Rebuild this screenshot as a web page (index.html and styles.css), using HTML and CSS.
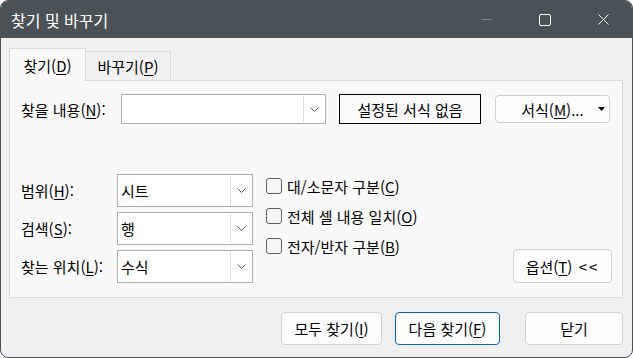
FILE: index.html
```html
<!DOCTYPE html>
<html lang="ko">
<head>
  <meta charset="UTF-8" />
  <title>찾기 및 바꾸기</title>
  <link rel="stylesheet" href="styles.css">
</head>
<body>
  <div class="window">
    <div class="titlebar">
      <span class="title">찾기 및 바꾸기</span>
      <div class="caption-buttons">
        <span class="cap-btn"><svg width="10" height="1"><rect width="10" height="1" fill="#7d8388"/></svg></span>
        <span class="cap-btn"><svg width="12" height="12"><rect x="0.5" y="0.5" width="11" height="11" rx="1.5" fill="none" stroke="#fff"/></svg></span>
        <span class="cap-btn"><svg width="11" height="11"><path d="M0.5 0.5L10.5 10.5M10.5 0.5L0.5 10.5" stroke="#fff"/></svg></span>
      </div>
    </div>

    <div class="client">
      <div class="tabs">
        <div class="tab active">찾기(<u>D</u>)</div>
        <div class="tab">바꾸기(<u>P</u>)</div>
      </div>

      <div class="panel">
        <div class="find-row">
          <label class="field-label find-label">찾을 내용(<u>N</u>):</label>
          <div class="combo find-combo">
            <span class="combo-text"></span>
            <span class="combo-arrow"><svg width="9" height="5"><path d="M0.5 0.5L4.5 4.5L8.5 0.5" fill="none" stroke="#5a5a5a"/></svg></span>
          </div>
          <button class="btn format-preview">설정된 서식 없음</button>
          <button class="btn format-btn">
            <span></span>
            <span>서식(<u>M</u>)...</span>
            <svg class="drop-tri" width="7" height="4"><path d="M0 0H7L3.5 4Z" fill="#000"/></svg>
          </button>
        </div>

        <div class="options">
          <div class="selects">
            <div class="select-row">
              <label class="field-label">범위(<u>H</u>):</label>
              <div class="combo">
                <span class="combo-text">시트</span>
                <span class="combo-arrow"><svg width="9" height="5"><path d="M0.5 0.5L4.5 4.5L8.5 0.5" fill="none" stroke="#5a5a5a"/></svg></span>
              </div>
            </div>
            <div class="select-row">
              <label class="field-label">검색(<u>S</u>):</label>
              <div class="combo">
                <span class="combo-text">행</span>
                <span class="combo-arrow"><svg width="9" height="5"><path d="M0.5 0.5L4.5 4.5L8.5 0.5" fill="none" stroke="#5a5a5a"/></svg></span>
              </div>
            </div>
            <div class="select-row">
              <label class="field-label">찾는 위치(<u>L</u>):</label>
              <div class="combo">
                <span class="combo-text">수식</span>
                <span class="combo-arrow"><svg width="9" height="5"><path d="M0.5 0.5L4.5 4.5L8.5 0.5" fill="none" stroke="#5a5a5a"/></svg></span>
              </div>
            </div>
          </div>

          <div class="checks">
            <div class="check"><span class="box"></span>대/소문자 구분(<u>C</u>)</div>
            <div class="check"><span class="box"></span>전체 셀 내용 일치(<u>O</u>)</div>
            <div class="check"><span class="box"></span>전자/반자 구분(<u>B</u>)</div>
          </div>

          <button class="btn options-btn">옵션(<u>T</u>) <span class="chevrons">&lt;&lt;</span></button>
        </div>
      </div>

      <div class="actions">
        <button class="btn find-all">모두 찾기(<u>I</u>)</button>
        <button class="btn find-next default">다음 찾기(<u>F</u>)</button>
        <button class="btn close-btn">닫기</button>
      </div>
    </div>
  </div>
</body>
</html>
```

FILE: styles.css
```css
:root {
  --frame: #4b5257;
  --face: #f0f0f0;
  --panel: #f9f9f9;
  --line: #dadada;
  --field-border: #adadad;
  --btn-border: #d0d0d0;
  --accent: #0067c0;
}

* {
  box-sizing: border-box;
  margin: 0;
  padding: 0;
}

html,
body {
  background: #ffffff;
}

body {
  font-family: "Noto Sans CJK KR", "Noto Sans", sans-serif;
  font-size: 15px;
  color: #000;
}

u {
  text-underline-offset: 2px;
}

.window {
  width: 633px;
  height: 358px;
  background: var(--face);
  border: 1px solid var(--frame);
  border-radius: 8px;
  overflow: hidden;
  display: flex;
  flex-direction: column;
}

/* title bar */
.titlebar {
  height: 37px;
  flex-shrink: 0;
  background: var(--frame);
  color: #fff;
  display: flex;
  align-items: center;
}

.title {
  padding-left: 10px;
  font-size: 16px;
}

.caption-buttons {
  margin-left: auto;
  display: flex;
}

.cap-btn {
  width: 58px;
  height: 37px;
  display: flex;
  align-items: center;
  justify-content: center;
}

.cap-btn svg {
  display: block;
}

/* dialog body */
.client {
  flex: 1;
  padding: 10px 9px 0 8px;
}

.tabs {
  display: flex;
  align-items: flex-end;
  height: 32px;
}

.tab {
  height: 29px;
  width: 85px;
  border: 1px solid var(--line);
  border-bottom: none;
  border-left: none;
  background: var(--face);
  display: flex;
  align-items: center;
  justify-content: center;
}

.tab.active {
  width: 77px;
  height: 33px;
  margin-bottom: -1px;
  border-left: 1px solid var(--line);
  background: var(--panel);
  position: relative;
  z-index: 1;
}

.panel {
  height: 218px;
  border: 1px solid var(--line);
  background: var(--panel);
  padding: 13px 10px 0 11px;
}

.field-label {
  width: 96px;
  white-space: nowrap;
}

.find-row {
  display: flex;
  align-items: center;
  height: 30px;
}

.find-label {
  width: 100px;
}

.combo {
  width: 136px;
  height: 33px;
  border: 1px solid var(--field-border);
  background: #fff;
  display: flex;
}

.combo-text {
  flex: 1;
  padding-left: 3px;
  display: flex;
  align-items: center;
}

.combo-arrow {
  width: 21px;
  margin: 1px 1px 1px 0;
  border-left: 1px solid #dcdcdc;
  display: flex;
  align-items: center;
  justify-content: center;
}

.find-combo {
  width: 205px;
  height: 30px;
}

.btn {
  font-family: inherit;
  font-size: 15px;
  color: #000;
  background: #fdfdfd;
  border: 1px solid var(--btn-border);
  border-radius: 4px;
  height: 33px;
}

.btn.default {
  border-color: var(--accent);
}

.format-preview {
  width: 142px;
  height: 30px;
  margin-left: 13px;
  border: 1px solid #000;
  border-radius: 0;
  background: #fafafa;
}

.format-btn {
  width: 115px;
  height: 28px;
  margin-left: 14px;
  display: grid;
  grid-template-columns: 1fr auto 1fr;
  align-items: center;
}

.drop-tri {
  justify-self: end;
  margin-right: 4px;
}

/* option area */
.options {
  margin-top: 50px;
  display: flex;
  align-items: flex-start;
}

.selects {
  display: flex;
  flex-direction: column;
  gap: 5px;
}

.select-row {
  display: flex;
  align-items: center;
}

.checks {
  margin-left: 13px;
  display: flex;
  flex-direction: column;
  gap: 6px;
}

.check {
  height: 24px;
  display: flex;
  align-items: center;
  white-space: nowrap;
}

.box {
  width: 16px;
  height: 16px;
  border: 1px solid #5f5f5f;
  border-radius: 3px;
  background: #f5f5f5;
  margin-right: 5px;
}

.options-btn {
  margin-left: auto;
  align-self: flex-end;
  width: 99px;
  height: 34px;
}

.chevrons {
  letter-spacing: 2px;
  margin-left: 2px;
}

/* bottom buttons */
.actions {
  margin-top: 14px;
  display: flex;
  justify-content: flex-end;
}

.find-all { width: 101px; }
.find-next { width: 105px; margin-left: 13px; }
.close-btn { width: 98px; margin-left: 25px; }
```
